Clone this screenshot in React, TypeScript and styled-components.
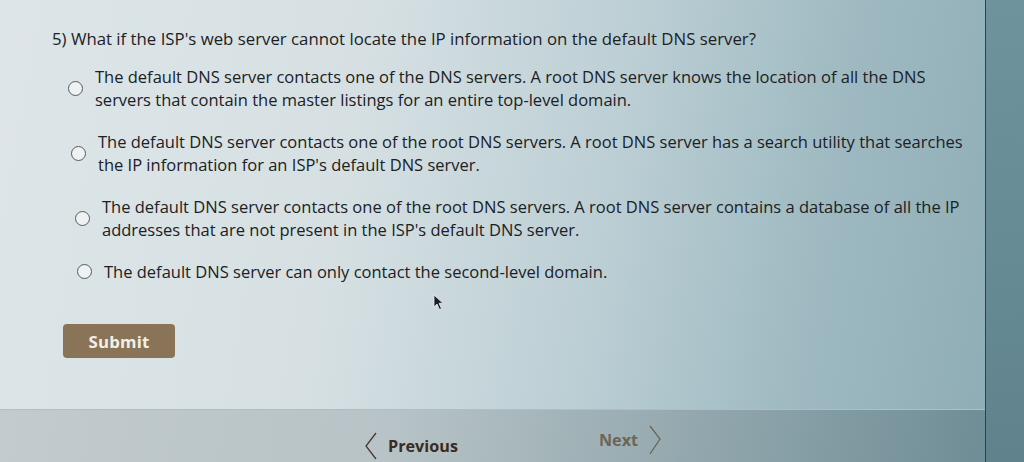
import * as React from 'react';
import styled, { createGlobalStyle } from 'styled-components';

const GlobalStyle = createGlobalStyle`
  html, body {
    margin: 0;
    padding: 0;
    background: #6c8e98;
  }
  * {
    box-sizing: border-box;
  }
`;

const Screen = styled.div`
  width: 1024px;
  height: 462px;
  display: flex;
  overflow: hidden;
  font-family: "Open Sans", "Noto Sans", sans-serif;
`;

const Panel = styled.div`
  position: relative;
  flex: 1;
  display: flex;
  flex-direction: column;
  background: linear-gradient(100deg, #dde5e8 0%, #d6e0e3 35%, #bccfd5 60%, #9db8c0 82%, #8fadb6 100%);
`;

const Bezel = styled.div`
  width: 39px;
  background: linear-gradient(180deg, #6f939d 0%, #668a94 60%, #5f828c 100%);
  border-left: 1px solid #2c434b;
`;

const Content = styled.div`
  flex: 1;
  padding: 27px 0 0 52px;
`;

const Question = styled.div`
  font-size: 16.8px;
  line-height: 23px;
  color: #1b2124;
  margin-bottom: 15px;
  white-space: nowrap;
`;

const OptionList = styled.div`
  display: flex;
  flex-direction: column;
  gap: 19px;
`;

const OptionRow = styled.label<{ indent: number }>`
  display: flex;
  align-items: center;
  gap: 12px;
  padding-left: ${(props) => props.indent}px;
  font-size: 16.5px;
  line-height: 23px;
  color: #1b2124;
`;

const Radio = styled.span`
  flex: none;
  width: 15px;
  height: 15px;
  border-radius: 50%;
  border: 1.4px solid #545c60;
  background: #eef2f3;
`;

const OptionText = styled.span`
  display: flex;
  flex-direction: column;
  white-space: nowrap;
`;

const SubmitButton = styled.button`
  margin: 41px 0 0 11px;
  width: 112px;
  height: 34px;
  border: none;
  border-radius: 4px;
  background: #8a7457;
  color: #f3efe8;
  font-family: "Open Sans", "Noto Sans", sans-serif;
  font-weight: 700;
  font-size: 16.8px;
  letter-spacing: 0.2px;
`;

const Footer = styled.div`
  height: 53px;
  display: flex;
  align-items: flex-start;
  gap: 141px;
  padding-left: 364px;
  background: linear-gradient(100deg, #c2cbce 0%, #b7c3c6 40%, #93a8ae 70%, #6f8d96 100%);
  border-top: 1px solid #b0bec2;
`;

const NavLink = styled.div<{ disabled?: boolean; top: number }>`
  display: flex;
  align-items: center;
  gap: 10px;
  margin-top: ${(props) => props.top}px;
  font-weight: 700;
  font-size: 16.2px;
  color: ${(props) => (props.disabled ? '#6d6557' : '#3a2b21')};
  svg {
    display: block;
  }
`;

const Cursor = styled.svg`
  position: absolute;
  left: 433px;
  top: 294px;
`;

const options = [
  {
    indent: 16,
    lines: [
      'The default DNS server contacts one of the DNS servers. A root DNS server knows the location of all the DNS',
      'servers that contain the master listings for an entire top-level domain.',
    ],
  },
  {
    indent: 19,
    lines: [
      'The default DNS server contacts one of the root DNS servers. A root DNS server has a search utility that searches',
      "the IP information for an ISP's default DNS server.",
    ],
  },
  {
    indent: 23,
    lines: [
      'The default DNS server contacts one of the root DNS servers. A root DNS server contains a database of all the IP',
      "addresses that are not present in the ISP's default DNS server.",
    ],
  },
  {
    indent: 25,
    lines: ['The default DNS server can only contact the second-level domain.'],
  },
];

export default function App() {
  return (
    <>
      <GlobalStyle />
      <Screen>
        <Panel>
          <Content>
            <Question>5) What if the ISP's web server cannot locate the IP information on the default DNS server?</Question>
            <OptionList>
              {options.map((o, i) => (
                <OptionRow key={i} indent={o.indent}>
                  <Radio />
                  <OptionText>
                    {o.lines.map((line, j) => (
                      <span key={j}>{line}</span>
                    ))}
                  </OptionText>
                </OptionRow>
              ))}
            </OptionList>
            <SubmitButton>Submit</SubmitButton>
          </Content>
          <Footer>
            <NavLink top={21}>
              <svg width="14" height="30" viewBox="0 0 14 30">
                <path d="M12 2 L2 15 L12 28" fill="none" stroke="#4a3a2e" strokeWidth="1.3" />
              </svg>
              Previous
            </NavLink>
            <NavLink disabled top={14}>
              Next
              <svg width="14" height="32" viewBox="0 0 14 32">
                <path d="M2 2 L12 15 L2 30" fill="none" stroke="#6d6557" strokeWidth="1.3" />
              </svg>
            </NavLink>
          </Footer>
          <Cursor width="12" height="17" viewBox="0 0 12 17">
            <path d="M1 1 L1 13 L4 10 L6.5 15.5 L8.5 14.6 L6 9.3 L10 9.3 Z" fill="#1c1f22" stroke="#e8eef0" strokeWidth="0.8" />
          </Cursor>
        </Panel>
        <Bezel />
      </Screen>
    </>
  );
}
